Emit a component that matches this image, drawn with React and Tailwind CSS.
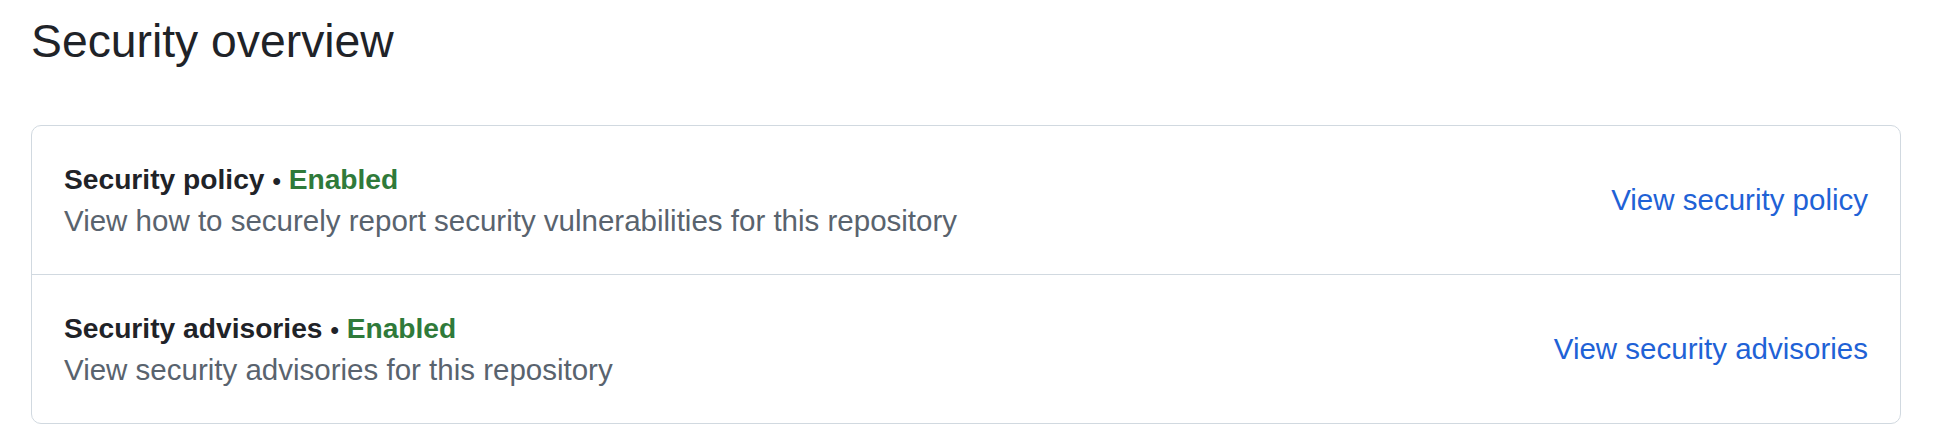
const items = [
  {
    title: 'Security policy',
    description: 'View how to securely report security vulnerabilities for this repository',
    action: 'View security policy',
  },
  {
    title: 'Security advisories',
    description: 'View security advisories for this repository',
    action: 'View security advisories',
  },
];

function App() {
  return (
    <div className="min-h-[444px] bg-white pl-[31px] pr-[39px] pt-[13px] font-['Liberation_Sans',Arial,sans-serif]">
      <h2 className="text-[46.3px] leading-[56px] text-[#1f2328]">Security overview</h2>

      {/* Feature list */}
      <div className="mt-[56px] rounded-[10px] border border-[#d1d9e0]">
        {items.map((item, idx) => (
          <div
            key={item.title}
            className={`flex items-center justify-between px-8 py-8 ${idx > 0 ? 'border-t border-[#d1d9e0]' : ''}`}
          >
            <div>
              <div className="text-[28.2px] leading-[42px] font-bold text-[#1f2328]">
                {item.title} <span className="text-[24px] leading-none">•</span>{' '}
                <span className="text-[#2f7a3a]">Enabled</span>
              </div>
              <p className="text-[29.5px] leading-[42px] text-[#59636e]">{item.description}</p>
            </div>
            <a href="#" className="text-[29.5px] leading-[42px] text-[#1f62d6]">
              {item.action}
            </a>
          </div>
        ))}
      </div>
    </div>
  );
}

export default App;
